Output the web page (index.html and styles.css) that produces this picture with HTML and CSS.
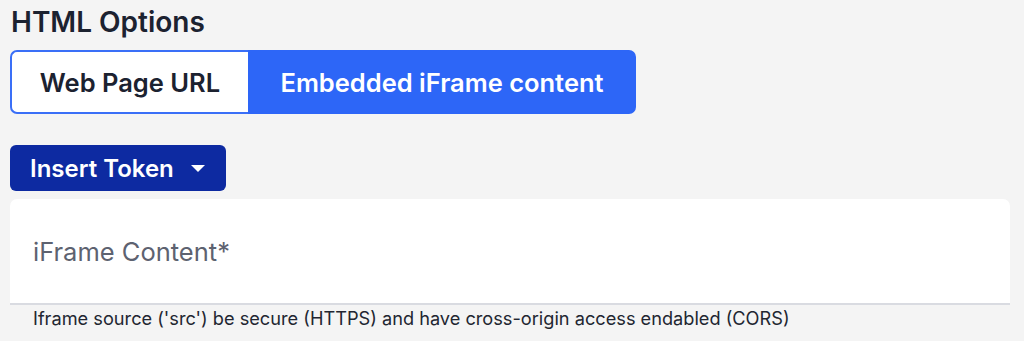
FILE: index.html
```html
<!DOCTYPE html>
<html>
<head>
<meta charset="utf-8">
<link rel="stylesheet" href="styles.css">
</head>
<body>
<div class="page">
  <h2 class="title">HTML Options</h2>
  <div class="toggle">
    <button class="opt">Web Page URL</button>
    <button class="opt active">Embedded iFrame content</button>
  </div>
  <button class="token">Insert Token <span class="caret"></span></button>
  <div class="field">
    <span class="label">iFrame Content*</span>
  </div>
  <p class="help">Iframe source ('src') be secure (HTTPS) and have cross-origin access endabled (CORS)</p>
</div>
</body>
</html>
```
FILE: styles.css
```css
html, body {
  margin: 0;
  padding: 0;
  background: #f4f4f4;
  font-family: "Inter", "Noto Sans", sans-serif;
}
.page {
  padding: 5px 14px 0 10px;
  display: flex;
  flex-direction: column;
  align-items: flex-start;
}
.title {
  margin: 0 0 0 1px;
  font-size: 28px;
  font-weight: 600;
  color: #1c2230;
  line-height: 34px;
}
.toggle {
  margin-top: 11px;
  display: flex;
  height: 64px;
}
.opt {
  font-family: inherit;
  font-size: 25.5px;
  font-weight: 600;
  border: 2px solid #3a6ff7;
  background: #fff;
  color: #1c2230;
  padding: 0;
  cursor: pointer;
}
.opt:first-child {
  border-radius: 7px 0 0 7px;
  border-right: none;
  width: 238px;
}
.opt.active {
  background: #2d66f7;
  border-color: #2d66f7;
  color: #fff;
  border-radius: 0 7px 7px 0;
  width: 388px;
}
.token {
  margin-top: 31px;
  height: 46px;
  width: 216px;
  background: #0d2aa1;
  color: #fff;
  border: none;
  border-radius: 6px;
  font-family: inherit;
  font-size: 24px;
  font-weight: 600;
  display: flex;
  align-items: center;
  padding: 0 20px;
  gap: 17px;
}
.caret {
  width: 0;
  height: 0;
  border-left: 7px solid transparent;
  border-right: 7px solid transparent;
  border-top: 7px solid #fff;
}
.field {
  margin-top: 8px;
  align-self: stretch;
  height: 104px;
  background: #fff;
  border-radius: 7px 7px 0 0;
  border-bottom: 2px solid #d9dbe1;
  display: flex;
  align-items: center;
  padding-left: 23px;
}
.label {
  font-size: 25.5px;
  color: #5d6270;
}
.help {
  margin: 2px 0 0 23px;
  font-size: 18.2px;
  color: #222631;
}
```
